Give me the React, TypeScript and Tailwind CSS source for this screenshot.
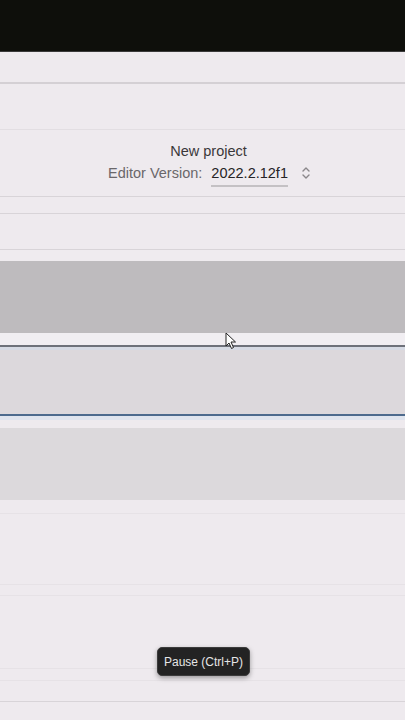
import React from 'react';

// Barra de filas vacía con línea inferior
const Row = ({ h, line = 'border-[#dcd8dc]', bg = 'bg-[#eeeaee]' }: { h: string; line?: string; bg?: string }) => (
  <div className={`${h} ${bg} border-b ${line}`} />
);

const UpDown = () => (
  <svg width="10" height="14" viewBox="0 0 10 14" fill="none" stroke="#8a878a" strokeWidth="1.4" strokeLinecap="round" strokeLinejoin="round">
    <path d="M2 5 L5 2 L8 5" />
    <path d="M2 9 L5 12 L8 9" />
  </svg>
);

const Cursor = () => (
  <svg width="12" height="18" viewBox="0 0 12 18" className="absolute left-[225px] top-[332px]">
    <path d="M1 1 L1 14 L4 11 L6.5 16.5 L8.5 15.5 L6 10 L10.5 10 Z" fill="#ffffff" stroke="#222" strokeWidth="1" strokeLinejoin="round" />
  </svg>
);

export default function App() {
  return (
    <div className="relative w-[405px] h-[720px] overflow-hidden bg-[#eeeaee] font-['Liberation_Sans',Arial,sans-serif]">
      {/* franja negra superior */}
      <div className="h-[52px] bg-[#0e0f0b] border-b border-[#3a3a3a]" />

      <Row h="h-[32px]" line="border-b-2 border-[#d4d0d4]" />
      <Row h="h-[46px]" line="border-[#e2dee2]" />

      {/* cabecera del proyecto */}
      <div className="h-[67px] border-b border-[#d8d4d8] flex flex-col items-center pt-[12px]">
        <div className="text-[14.5px] leading-[18px] text-[#3a383a] pl-[12px]">New project</div>
        <div className="flex items-start mt-[4px] text-[14.5px] leading-[18px] pl-[14px]">
          <span className="text-[#6a676a]">Editor Version:</span>
          <span className="ml-[9px] text-[#262426] font-medium border-b-2 border-[#c4c1c4] pb-[3px]">2022.2.12f1</span>
          <span className="ml-[13px] mt-[2px]"><UpDown /></span>
        </div>
      </div>

      <Row h="h-[17px]" line="border-[#d8d4d8]" />
      <Row h="h-[36px]" line="border-[#d8d4d8]" />
      <div className="h-[11px] bg-[#efebef]" />

      {/* bloque gris */}
      <div className="h-[72px] bg-[#bebbbe]" />
      <div className="h-[12px] bg-[#f1eef2]" />
      <div className="h-[2px] bg-[#6e717a]" />

      {/* fila seleccionada */}
      <div className="h-[3px] bg-[#d6dae4]" />
      <div className="h-[64px] bg-[#dcd8dc]" />
      <div className="h-[2px] bg-[#4d6a8d]" />
      <div className="h-[4px] bg-[#dfe4ee]" />
      <div className="h-[8px] bg-[#eeeaee]" />

      <div className="h-[72px] bg-[#dcd9dc]" />

      <Row h="h-[14px]" line="border-[#e6e2e6]" />
      <Row h="h-[71px]" line="border-[#e6e2e6]" />
      <Row h="h-[11px]" line="border-[#e6e2e6]" />
      <Row h="h-[73px]" line="border-[#e6e2e6]" />
      <Row h="h-[12px]" line="border-[#e6e2e6]" />
      <Row h="h-[21px]" line="border-[#d8d4d8]" />

      {/* tooltip */}
      <div className="absolute left-[157px] top-[647px] w-[93px] h-[29px] rounded-[5px] bg-[#232323] border border-[#3c3c3c] shadow-[0_2px_5px_rgba(0,0,0,0.35)] flex items-center justify-center text-[12px] font-medium text-[#e6e6e6]">
        Pause (Ctrl+P)
      </div>

      <Cursor />
    </div>
  );
}
